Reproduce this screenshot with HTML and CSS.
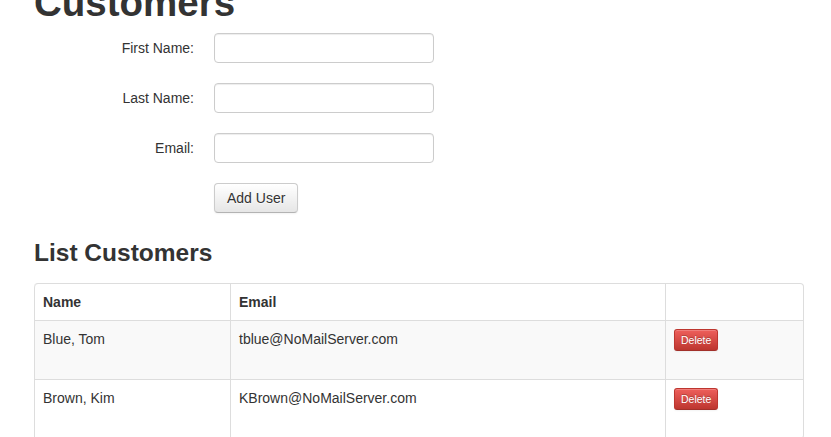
FILE: index.html
```html
<!DOCTYPE html>
<html lang="en">
<head>
<meta charset="utf-8">
<title>Customers</title>
<link rel="stylesheet" href="styles.css">
</head>
<body>
<div class="container">
  <h1 class="page-title">Customers</h1>
  <form class="form-horizontal">
    <div class="control-group">
      <label class="control-label" for="first">First Name:</label>
      <div class="controls"><input id="first" type="text"></div>
    </div>
    <div class="control-group">
      <label class="control-label" for="last">Last Name:</label>
      <div class="controls"><input id="last" type="text"></div>
    </div>
    <div class="control-group">
      <label class="control-label" for="email">Email:</label>
      <div class="controls"><input id="email" type="text"></div>
    </div>
    <div class="control-group">
      <div class="controls"><button type="button" class="btn">Add User</button></div>
    </div>
  </form>
  <h3 class="section-title">List Customers</h3>
  <table class="table">
    <colgroup>
      <col class="col-name">
      <col class="col-email">
      <col class="col-action">
    </colgroup>
    <thead>
      <tr><th>Name</th><th>Email</th><th></th></tr>
    </thead>
    <tbody>
      <tr class="odd">
        <td>Blue, Tom</td>
        <td>tblue@NoMailServer.com</td>
        <td><form class="row-form"><button type="button" class="btn-danger">Delete</button></form></td>
      </tr>
      <tr>
        <td>Brown, Kim</td>
        <td>KBrown@NoMailServer.com</td>
        <td><form class="row-form"><button type="button" class="btn-danger">Delete</button></form></td>
      </tr>
    </tbody>
  </table>
</div>
</body>
</html>
```

FILE: styles.css
```css
html, body {
  margin: 0;
  padding: 0;
  overflow: hidden;
  background: #fff;
}
body {
  font-family: "Liberation Sans", Arial, sans-serif;
  font-size: 14px;
  line-height: 20px;
  color: #333;
}
.container {
  margin-top: -17.5px;
  margin-left: 34px;
  width: 770px;
}
.page-title {
  font-size: 38.5px;
  line-height: 40px;
  font-weight: bold;
  margin: 0 0 10px 0;
  color: #333;
}
.form-horizontal {
  margin: 0 0 20px 0;
}
.control-group {
  display: flex;
  margin-bottom: 20px;
}
.control-group:last-child {
  margin-bottom: 0;
}
.control-label {
  width: 160px;
  text-align: right;
  padding-top: 5px;
  flex: none;
}
.controls {
  margin-left: 20px;
}
.control-group .controls:first-child {
  margin-left: 180px;
}
input[type="text"] {
  display: block;
  box-sizing: content-box;
  width: 206px;
  height: 20px;
  padding: 4px 6px;
  margin: 0;
  font: inherit;
  color: #555;
  border: 1px solid #ccc;
  border-radius: 4px;
  box-shadow: inset 0 1px 1px rgba(0,0,0,0.075);
  background: #fff;
  outline: none;
}
.btn {
  display: block;
  height: 30px;
  box-sizing: border-box;
  padding: 4px 12px;
  font: inherit;
  font-size: 14px;
  line-height: 20px;
  color: #333;
  text-shadow: 0 1px 1px rgba(255,255,255,0.75);
  background: linear-gradient(to bottom, #ffffff, #e6e6e6);
  border: 1px solid #ccc;
  border-bottom-color: #b3b3b3;
  border-radius: 4px;
  box-shadow: inset 0 1px 0 rgba(255,255,255,0.2), 0 1px 2px rgba(0,0,0,0.05);
}
.section-title {
  font-size: 24.5px;
  line-height: 40px;
  font-weight: bold;
  margin: 10px 0;
  color: #333;
}
.table {
  width: 770px;
  table-layout: fixed;
  border-collapse: separate;
  border-spacing: 0;
  border: 1px solid #ddd;
  border-left: 0;
  border-radius: 4px;
  margin-bottom: 20px;
}
.col-name { width: 196px; }
.col-email { width: 435px; }
.col-action { width: 138px; }
.table th, .table td {
  padding: 8px;
  line-height: 20px;
  text-align: left;
  vertical-align: top;
  border-top: 1px solid #ddd;
  border-left: 1px solid #ddd;
}
.table th {
  font-weight: bold;
  vertical-align: bottom;
  border-top: 0;
}
.table thead th:first-child { border-top-left-radius: 4px; }
.table thead th:last-child { border-top-right-radius: 4px; }
.table tbody tr.odd td {
  background: #f9f9f9;
}
.row-form {
  margin: 0 0 20px 0;
}
.btn-danger {
  display: block;
  height: 22px;
  box-sizing: border-box;
  padding: 0 6px;
  font-family: inherit;
  font-size: 10.5px;
  line-height: 20px;
  color: #fff;
  text-shadow: 0 -1px 0 rgba(0,0,0,0.25);
  background: linear-gradient(to bottom, #ee5f5b, #bd362f);
  border: 1px solid #bd362f;
  border-bottom-color: #a2302a;
  border-radius: 3px;
  box-shadow: inset 0 1px 0 rgba(255,255,255,0.2), 0 1px 2px rgba(0,0,0,0.05);
}
```
